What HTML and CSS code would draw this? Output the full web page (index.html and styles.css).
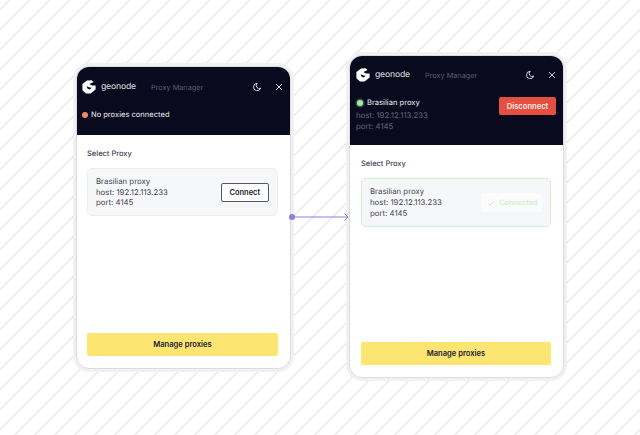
FILE: index.html
```html
<!DOCTYPE html>
<html lang="en">
<head>
    <meta charset="UTF-8">
    <meta name="viewport" content="width=device-width, initial-scale=1.0">
    <title>Geonode - Proxy Manager</title>
    <link rel="stylesheet" href="styles.css">
</head>
<body>
    <div class="stage">
        <!-- not connected -->
        <div class="panel panel-idle">
            <div class="header">
                <div class="topbar">
                    <svg class="logo" viewBox="0 0 14 14">
                        <path fill="#fff" d="M5 .6 9.6.3 11.6 2 7.4 4 10 5.4 13.6 5.6V9.6L8.6 13.4 4 13.5.4 10.2V4Z"/>
                        <path fill="#0a0a1e" d="M4.6 6.3 7.8 7.4 9.8 7.8 7.6 9.6 5.4 8.6Z"/>
                    </svg>
                    <span class="brand">geonode</span>
                    <span class="app-name">Proxy Manager</span>
                    <svg class="icon icon-moon" viewBox="0 0 12 12">
                        <path d="M6.2 1.6A4.4 4.4 0 1 0 10.4 7.4 3.6 3.6 0 0 1 6.2 1.6Z"/>
                    </svg>
                    <svg class="icon icon-close" viewBox="0 0 12 12">
                        <path d="M2.5 2.5 9.5 9.5M9.5 2.5 2.5 9.5"/>
                    </svg>
                </div>
                <div class="status status-idle">
                    <span class="dot dot-off"></span>
                    <span>No proxies connected</span>
                </div>
            </div>
            <div class="content">
                <div class="section-title">Select Proxy</div>
                <div class="proxy-card">
                    <div class="proxy-info">
                        <div>Brasilian proxy</div>
                        <div>host: 192.12.113.233</div>
                        <div>port: 4145</div>
                    </div>
                    <button class="btn btn-connect">Connect</button>
                </div>
                <button class="btn btn-manage">Manage proxies</button>
            </div>
        </div>

        <!-- connected -->
        <div class="panel panel-active">
            <div class="header">
                <div class="topbar">
                    <svg class="logo" viewBox="0 0 14 14">
                        <path fill="#fff" d="M5 .6 9.6.3 11.6 2 7.4 4 10 5.4 13.6 5.6V9.6L8.6 13.4 4 13.5.4 10.2V4Z"/>
                        <path fill="#0a0a1e" d="M4.6 6.3 7.8 7.4 9.8 7.8 7.6 9.6 5.4 8.6Z"/>
                    </svg>
                    <span class="brand">geonode</span>
                    <span class="app-name">Proxy Manager</span>
                    <svg class="icon icon-moon" viewBox="0 0 12 12">
                        <path d="M6.2 1.6A4.4 4.4 0 1 0 10.4 7.4 3.6 3.6 0 0 1 6.2 1.6Z"/>
                    </svg>
                    <svg class="icon icon-close" viewBox="0 0 12 12">
                        <path d="M2.5 2.5 9.5 9.5M9.5 2.5 2.5 9.5"/>
                    </svg>
                </div>
                <div class="connection">
                    <div class="connection-info">
                        <div class="status">
                            <span class="dot dot-on"></span>
                            <span>Brasilian proxy</span>
                        </div>
                        <div class="connection-detail">host: 192.12.113.233</div>
                        <div class="connection-detail">port: 4145</div>
                    </div>
                    <button class="btn btn-disconnect">Disconnect</button>
                </div>
            </div>
            <div class="content">
                <div class="section-title">Select Proxy</div>
                <div class="proxy-card">
                    <div class="proxy-info">
                        <div>Brasilian proxy</div>
                        <div>host: 192.12.113.233</div>
                        <div>port: 4145</div>
                    </div>
                    <div class="connected-tag">
                        <svg class="icon-check" viewBox="0 0 10 10">
                            <path d="M1.5 5.4 4 7.8 8.6 2.6"/>
                        </svg>
                        <span>Connected</span>
                    </div>
                </div>
                <button class="btn btn-manage">Manage proxies</button>
            </div>
        </div>

        <!-- arrow between the two states -->
        <svg class="connector" viewBox="0 0 62 10">
            <circle cx="4" cy="5" r="3" fill="#8f7fe0"/>
            <path d="M4 5H60M56.5 1.5 60 5 56.5 8.5" fill="none" stroke="#8f7fe0" stroke-width="1"/>
        </svg>
    </div>
</body>
</html>
```

FILE: styles.css
```css
* {
    box-sizing: border-box;
}
body {
    margin: 0;
    font-family: Inter, "Liberation Sans", sans-serif;
    text-rendering: geometricPrecision;
    background: white;
}
.stage {
    position: relative;
    display: flex;
    align-items: center;
    justify-content: center;
    gap: 58px;
    width: 640px;
    height: 435px;
    overflow: hidden;
    background: repeating-linear-gradient(135deg, #fff 0, #fff 6.2px, #ebebeb 6.2px, #ebebeb 7.2px, #fff 7.2px, #fff 14.14px);
}
.panel {
    display: flex;
    flex-direction: column;
    width: 215px;
    background: white;
    border-radius: 13px;
    border: 1px solid #dcdcdf;
    box-shadow: 0 0 0 3px #f1f1f1;
    overflow: hidden;
}
.panel-idle {
    height: 303px;
}
.panel-active {
    height: 323px;
    margin-bottom: 2px;
}
.header {
    background: #0a0a1e;
    color: #d8d8dc;
    padding: 0 6px;
}
.panel-idle .header {
    height: 68px;
    padding-left: 5px;
}
.panel-active .header {
    height: 89px;
}
.topbar {
    display: flex;
    align-items: center;
    height: 38px;
}
.panel-idle .topbar {
    height: 40px;
}
.logo {
    width: 14px;
    height: 14px;
    margin-right: 5px;
}
.brand {
    width: 50px;
    font-size: 8.6px;
    font-weight: 500;
    color: #c9c9ce;
    letter-spacing: -0.2px;
}
.app-name {
    flex: 1;
    font-size: 7.3px;
    color: #5d5e70;
}
.icon {
    width: 10px;
    height: 10px;
    fill: none;
    stroke: #e4e4e8;
    stroke-width: 1.1;
}
.icon-moon {
    margin-right: 12px;
}
.status {
    display: flex;
    align-items: center;
    gap: 3px;
    font-size: 7.5px;
    font-weight: 500;
    line-height: 11px;
}
.status-idle {
    margin-top: 2px;
}
.dot {
    width: 6px;
    height: 6px;
    border-radius: 50%;
}
.dot-off {
    background: #ee8a6c;
}
.dot-on {
    background: #a5e8a2;
    box-shadow: 0 0 0 1.5px #3c4a44;
    margin: 0 1px;
}
.connection {
    display: flex;
    justify-content: space-between;
    align-items: flex-start;
    margin-top: 3px;
}
.connection-info {
    line-height: 11px;
}
.connection-detail {
    font-size: 7.8px;
    color: #666778;
}
.connection-info .status {
    margin-bottom: 2px;
}
.btn {
    font-family: inherit;
    border-radius: 2px;
    cursor: pointer;
}
.btn-disconnect {
    width: 57px;
    height: 18px;
    margin-right: 1px;
    padding: 0;
    border: none;
    background: #e4503f;
    color: #fbe9e6;
    font-size: 7.6px;
    font-weight: 600;
}
.content {
    flex: 1;
    display: flex;
    flex-direction: column;
    padding: 14px 12px 12px 10px;
}
.panel-active .content {
    padding-left: 11px;
}
.section-title {
    font-size: 7.5px;
    font-weight: 500;
    color: #3f4150;
    line-height: 10px;
    margin-bottom: 9px;
}
.proxy-card {
    display: flex;
    align-items: center;
    justify-content: space-between;
    height: 48px;
    padding: 0 8.5px 0 8px;
    background: #f6f7f9;
    border: 1px solid #eceef1;
    border-radius: 5px;
}
.panel-active .proxy-card {
    height: 49px;
    border-color: #d0f0cf;
}
.proxy-info {
    font-size: 7.8px;
    line-height: 10.7px;
    color: #3f4150;
}
.btn-connect {
    width: 47.5px;
    height: 19px;
    padding: 0;
    background: white;
    border: 1px solid #55566a;
    color: #1c1c2c;
    font-size: 7.5px;
    font-weight: 600;
}
.connected-tag {
    display: flex;
    align-items: center;
    gap: 4px;
    padding: 0 4px 0 6px;
    height: 19px;
    background: #fbfbfc;
    color: #c9efc8;
    font-size: 7.3px;
    font-weight: 500;
}
.icon-check {
    width: 8px;
    height: 8px;
    fill: none;
    stroke: #c0ecbe;
    stroke-width: 1.2;
}
.btn-manage {
    margin-top: auto;
    height: 23px;
    padding: 0;
    border: none;
    background: #fde572;
    color: #1c1c2c;
    font-size: 7.6px;
    font-weight: 600;
}
.connector {
    position: absolute;
    left: 288px;
    top: 212px;
    width: 62px;
    height: 10px;
}
```
